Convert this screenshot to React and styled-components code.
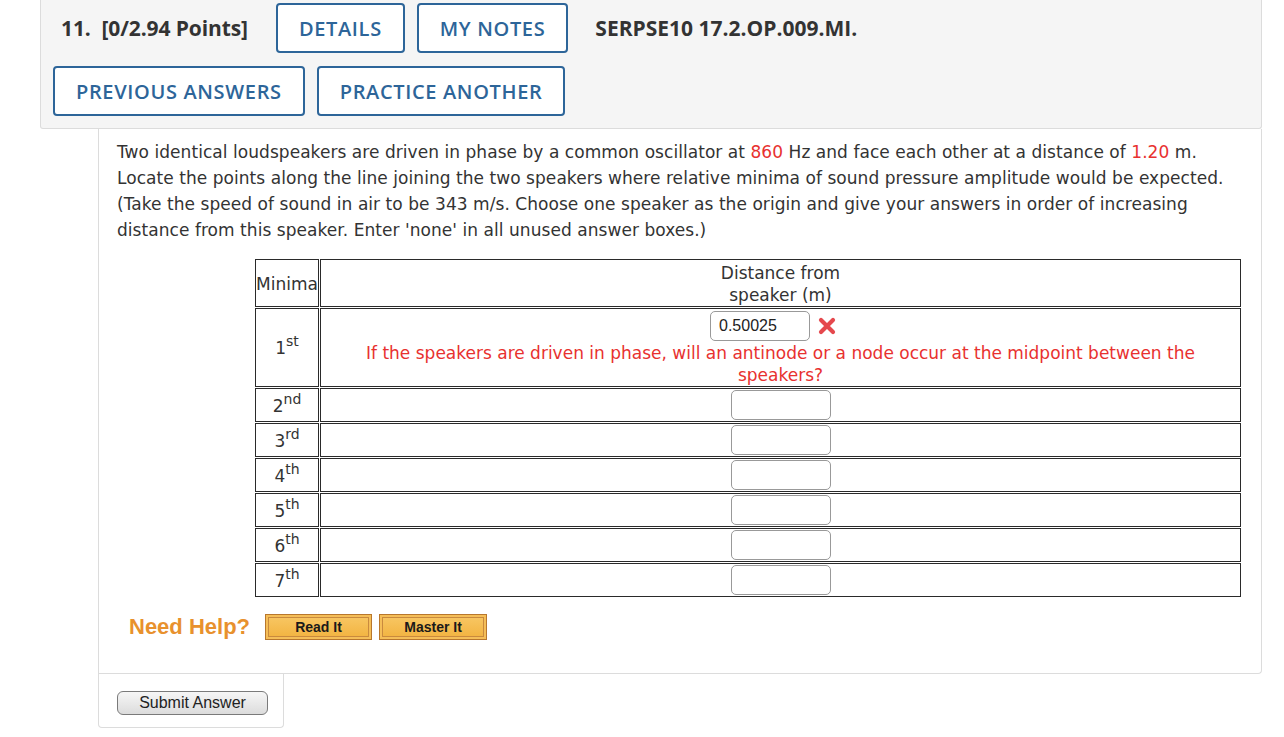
import React from "react";
import styled, { createGlobalStyle } from "styled-components";

const GlobalStyle = createGlobalStyle`
  body {
    margin: 0;
    background: #ffffff;
    font-family: "Open Sans", "Liberation Sans", sans-serif;
  }
`

const Page = styled.div`
  padding-left: 40px;
  width: 1222px;
`

const Header = styled.div`
  background: #f5f5f5;
  border: 1px solid #dcdcdc;
  border-top: none;
  border-radius: 0 0 3px 3px;
  padding: 3px 12px 12px 12px;
  display: flex;
  flex-direction: column;
  gap: 13px;
`

const HeaderRow = styled.div`
  display: flex;
  align-items: center;
  gap: 12px;
`

const Title = styled.span`
  font-weight: 700;
  font-size: 21px;
  color: #333;
  margin: 0 16px 0 8px;
  letter-spacing: -0.1px;
`

const Code = styled.span`
  font-weight: 700;
  font-size: 21px;
  color: #333;
  margin-left: 15px;
  letter-spacing: 0px;
`

const OutlineButton = styled.button`
  height: 50px;
  padding: 0 21px;
  background: #ffffff;
  border: 2px solid #2d6599;
  border-radius: 4px;
  color: #2d6599;
  font-family: "Open Sans", "Liberation Sans", sans-serif;
  font-size: 20px;
  font-weight: 600;
  letter-spacing: 0.65px;
`

const Body = styled.div`
  margin-left: 58px;
  border: 1px solid #dcdcdc;
  border-top: none;
  border-radius: 0 0 4px 0;
  height: 545px;
  padding: 10px 18px 0 18px;
  box-sizing: border-box;
`

const Question = styled.p`
  margin: 0;
  font-family: Verdana, "DejaVu Sans", sans-serif;
  font-size: 17px;
  line-height: 26px;
  color: #333;
  letter-spacing: 0.05px;
  white-space: nowrap;
`

const Red = styled.span`
  color: #e8312f;
`

const Grid = styled.table`
  margin: 15px 0 0 137px;
  width: 988px;
  border-collapse: separate;
  border-spacing: 1px;
  font-family: Verdana, "DejaVu Sans", sans-serif;
  font-size: 17px;
  color: #333;
`

const Cell = styled.td`
  border: 1px solid #2a2a2a;
  padding: 0;
  text-align: center;
  vertical-align: middle;
  line-height: 23px;
  width: ${(p) => (p.$narrow ? "62px" : "auto")};
  height: ${(p) => p.$h || "auto"};
`

const HeadCell = styled(Cell)`
  line-height: 22px;
  padding-top: 2px;
`

const Ordinal = styled.span`
  position: relative;
  top: 1px;
  sup {
    font-size: 14px;
    vertical-align: 8px;
    line-height: 0;
  }
`

const AnswerBox = styled.div`
  display: inline-block;
  width: 100px;
  height: 30px;
  box-sizing: border-box;
  border: 1px solid #999;
  border-radius: 5px;
  background: #fff;
  font-family: Arial, "Liberation Sans", sans-serif;
  font-size: 16px;
  line-height: 28px;
  text-align: left;
  padding-left: 8px;
  color: #222;
  vertical-align: middle;
`

const AnswerLine = styled.div`
  display: flex;
  justify-content: center;
  align-items: center;
  gap: 7px;
  padding: 1px 0 0 0;
  margin-left: -14px;
`

const Hint = styled.div`
  color: #e8312f;
  line-height: 22px;
  padding: 1px 30px 0;
`

const HelpRow = styled.div`
  display: flex;
  align-items: center;
  margin: 16px 0 0 12px;
  gap: 7px;
`

const HelpLabel = styled.span`
  font-family: Arial, "Liberation Sans", sans-serif;
  font-weight: 700;
  font-size: 22px;
  color: #e8912d;
  margin-right: 8px;
`

const HelpButton = styled.button`
  width: ${(p) => p.$w}px;
  height: 26px;
  border: 1px solid #b8772d;
  background: linear-gradient(#f8c866, #f2b23e);
  box-shadow: inset 0 0 0 2px #f5be58, inset 0 0 0 3px #c98a3e;
  font-family: Arial, "Liberation Sans", sans-serif;
  font-weight: 700;
  font-size: 14px;
  color: #1a1a1a;
  padding: 0;
`

const SubmitTab = styled.div`
  margin-left: 58px;
  width: 186px;
  box-sizing: border-box;
  border: 1px solid #dcdcdc;
  border-top: none;
  border-radius: 0 0 4px 4px;
  padding: 17px 17px 12px 18px;
`

const SubmitButton = styled.button`
  width: 151px;
  height: 24px;
  border: 1px solid #7a7a7a;
  border-radius: 6px;
  background: linear-gradient(#f6f6f6, #dcdcdc);
  font-family: Arial, "Liberation Sans", sans-serif;
  font-size: 16px;
  color: #222;
  padding: 0;
`

const WrongMark = () => (
  <svg width="20" height="20" viewBox="0 0 20 20">
    <path d="M4 4 L16 16 M16 4 L4 16" stroke="#e5484d" strokeWidth="4.2" strokeLinecap="round" />
  </svg>
)

const ordinals = [
  ["2", "nd"],
  ["3", "rd"],
  ["4", "th"],
  ["5", "th"],
  ["6", "th"],
  ["7", "th"],
]

export default function App() {
  return (
    <Page>
      <GlobalStyle />
      <Header>
        <HeaderRow>
          <Title>11.&nbsp; [0/2.94 Points]</Title>
          <OutlineButton>DETAILS</OutlineButton>
          <OutlineButton>MY NOTES</OutlineButton>
          <Code>SERPSE10 17.2.OP.009.MI.</Code>
        </HeaderRow>
        <HeaderRow>
          <OutlineButton>PREVIOUS ANSWERS</OutlineButton>
          <OutlineButton>PRACTICE ANOTHER</OutlineButton>
        </HeaderRow>
      </Header>
      <Body>
        <Question>
          Two identical loudspeakers are driven in phase by a common oscillator at <Red>860</Red> Hz and face each
          other at a distance of <Red>1.20</Red> m.
          <br />
          Locate the points along the line joining the two speakers where relative minima of sound pressure amplitude
          would be expected.
          <br />
          (Take the speed of sound in air to be 343 m/s. Choose one speaker as the origin and give your answers in
          order of increasing
          <br />
          distance from this speaker. Enter 'none' in all unused answer boxes.)
        </Question>
        <Grid>
          <tbody>
            <tr>
              <HeadCell $narrow>Minima</HeadCell>
              <HeadCell>
                Distance from
                <br />
                speaker (m)
              </HeadCell>
            </tr>
            <tr>
              <Cell $narrow>
                <Ordinal>
                  1<sup>st</sup>
                </Ordinal>
              </Cell>
              <Cell $h="77px">
                <AnswerLine>
                  <AnswerBox>0.50025</AnswerBox>
                  <WrongMark />
                </AnswerLine>
                <Hint>
                  If the speakers are driven in phase, will an antinode or a node occur at the midpoint between the
                  speakers?
                </Hint>
              </Cell>
            </tr>
            {ordinals.map(([n, s]) => (
              <tr key={n}>
                <Cell $narrow $h="32px">
                  <Ordinal>
                    {n}
                    <sup>{s}</sup>
                  </Ordinal>
                </Cell>
                <Cell $h="32px">
                  <AnswerBox />
                </Cell>
              </tr>
            ))}
          </tbody>
        </Grid>
        <HelpRow>
          <HelpLabel>Need Help?</HelpLabel>
          <HelpButton $w={107}>Read It</HelpButton>
          <HelpButton $w={108}>Master It</HelpButton>
        </HelpRow>
      </Body>
      <SubmitTab>
        <SubmitButton>Submit Answer</SubmitButton>
      </SubmitTab>
    </Page>
  )
}
